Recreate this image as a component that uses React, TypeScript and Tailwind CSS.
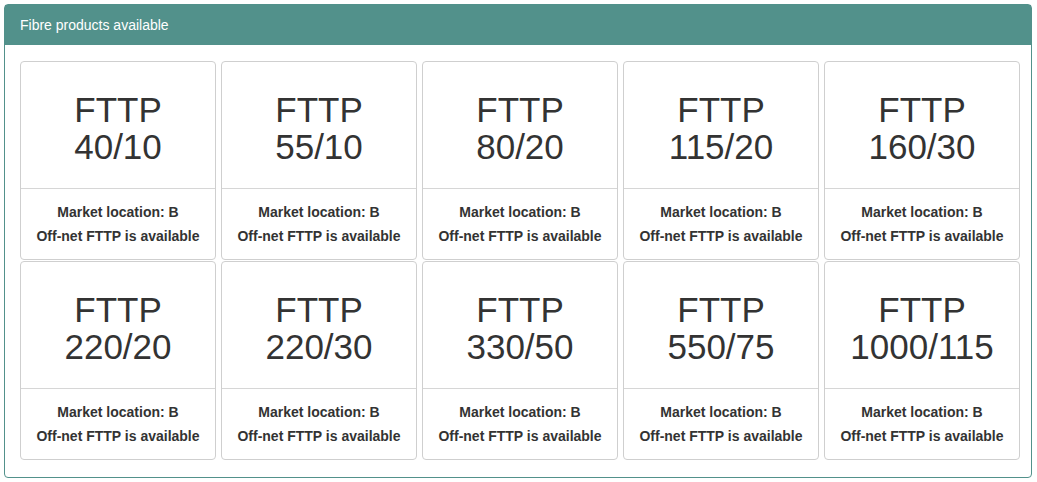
const products = [
  "40/10",
  "55/10",
  "80/20",
  "115/20",
  "160/30",
  "220/20",
  "220/30",
  "330/50",
  "550/75",
  "1000/115",
];

const ProductCard: React.FC<{ speed: string }> = ({ speed }) => {
  return (
    <div className="border border-[#cfcfcf] rounded-[4px] bg-white flex flex-col">
      <div className="h-[126px] flex flex-col items-center justify-center pt-[5px] text-[35px] leading-[37px] text-[#333]">
        <div>FTTP</div>
        <div>{speed}</div>
      </div>
      <div className="border-t border-[#d6d6d6] h-[71px] flex flex-col items-center justify-center text-[14px] font-bold leading-[24px] text-[#333]">
        <div>Market location: B</div>
        <div>Off-net FTTP is available</div>
      </div>
    </div>
  );
};

export default function App() {
  return (
    <div
      className="w-[1037px] h-[482px] bg-white pt-[4px] pl-[4px] pr-[5px]"
      style={{ fontFamily: '"Liberation Sans", Arial, sans-serif' }}
    >
      <div className="border border-[#52918b] rounded-[4px] h-[474px] flex flex-col">
        <div className="bg-[#52918b] text-white text-[14px] h-[40px] flex items-center px-[15px]">
          Fibre products available
        </div>
        <div className="pl-[15px] pr-[11px] pt-[16px]">
          <div className="grid grid-cols-5 gap-x-[5px] gap-y-[1px]">
            {products.map((p) => (
              <ProductCard key={p} speed={p} />
            ))}
          </div>
        </div>
      </div>
    </div>
  );
}
